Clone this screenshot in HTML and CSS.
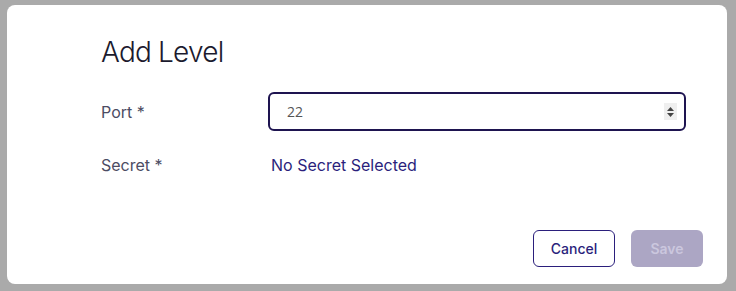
FILE: index.html
```html
<!DOCTYPE html>
<html lang="en">
<head>
    <meta charset="UTF-8">
    <meta name="viewport" content="width=device-width, initial-scale=1.0">
    <title>Add Level</title>
    <link rel="stylesheet" href="styles.css">
</head>
<body>
    <div class="backdrop">
        <div class="modal">
            <h1 class="title">Add Level</h1>

            <div class="row">
                <label class="label" for="port">Port *</label>
                <div class="field">
                    <input type="number" id="port" class="input" value="22">
                    <span class="spin">
                        <svg width="9" height="12" viewBox="0 0 9 12">
                            <path d="M4.5 1 L8 5 L1 5 Z M4.5 11 L8 7 L1 7 Z" fill="#444"/>
                        </svg>
                    </span>
                </div>
            </div>

            <div class="row">
                <span class="label">Secret *</span>
                <div class="field">
                    <span class="secret">No Secret Selected</span>
                </div>
            </div>

            <div class="actions">
                <button class="btn btn-cancel">Cancel</button>
                <button class="btn btn-save" disabled>Save</button>
            </div>
        </div>
    </div>
</body>
</html>
```

FILE: styles.css
```css
* {
    box-sizing: border-box;
}

body {
    margin: 0;
    background-color: #aaaaaa;
    font-family: Inter, "Noto Sans", sans-serif;
}

.backdrop {
    width: 736px;
    height: 291px;
    padding: 5px 9px 7px 7px;
}

.modal {
    background-color: #fff;
    border-radius: 8px;
    height: 100%;
    padding: 30px 24px 0 94px;
    display: flex;
    flex-direction: column;
}

.title {
    margin: 0 0 23px 0;
    font-size: 28px;
    font-weight: 300;
    color: #1b1a2e;
    letter-spacing: -0.8px;
}

.row {
    display: flex;
    align-items: center;
    height: 39px;
    margin-bottom: 14px;
}

.label {
    width: 167px;
    font-size: 16px;
    color: #4c4c63;
}

.field {
    width: 418px;
    position: relative;
}

.input {
    width: 100%;
    height: 39px;
    border: 2px solid #1e1450;
    border-radius: 6px;
    padding: 0 10px 0 17px;
    font-family: "Open Sans", "Noto Sans", sans-serif;
    font-size: 14px;
    color: #555;
    outline: none;
    -moz-appearance: textfield;
}

.input::-webkit-inner-spin-button,
.input::-webkit-outer-spin-button {
    -webkit-appearance: none;
    margin: 0;
}

.spin {
    position: absolute;
    right: 9px;
    top: 11px;
    width: 13px;
    height: 17px;
    background-color: #efefef;
    display: flex;
    align-items: center;
    justify-content: center;
}

.secret {
    font-size: 16px;
    color: #2b1f7c;
    padding-left: 3px;
}

.actions {
    display: flex;
    justify-content: flex-end;
    gap: 16px;
    margin-top: 32px;
}

.btn {
    height: 37px;
    border-radius: 6px;
    font-family: Inter, "Noto Sans", sans-serif;
    font-size: 14px;
    font-weight: 500;
}

.btn-cancel {
    width: 82px;
    background-color: #fff;
    border: 1px solid #2b1f7c;
    color: #2b1f7c;
}

.btn-save {
    width: 72px;
    background-color: #aca6c4;
    border: none;
    color: #cbc7de;
    font-weight: 600;
}
```
